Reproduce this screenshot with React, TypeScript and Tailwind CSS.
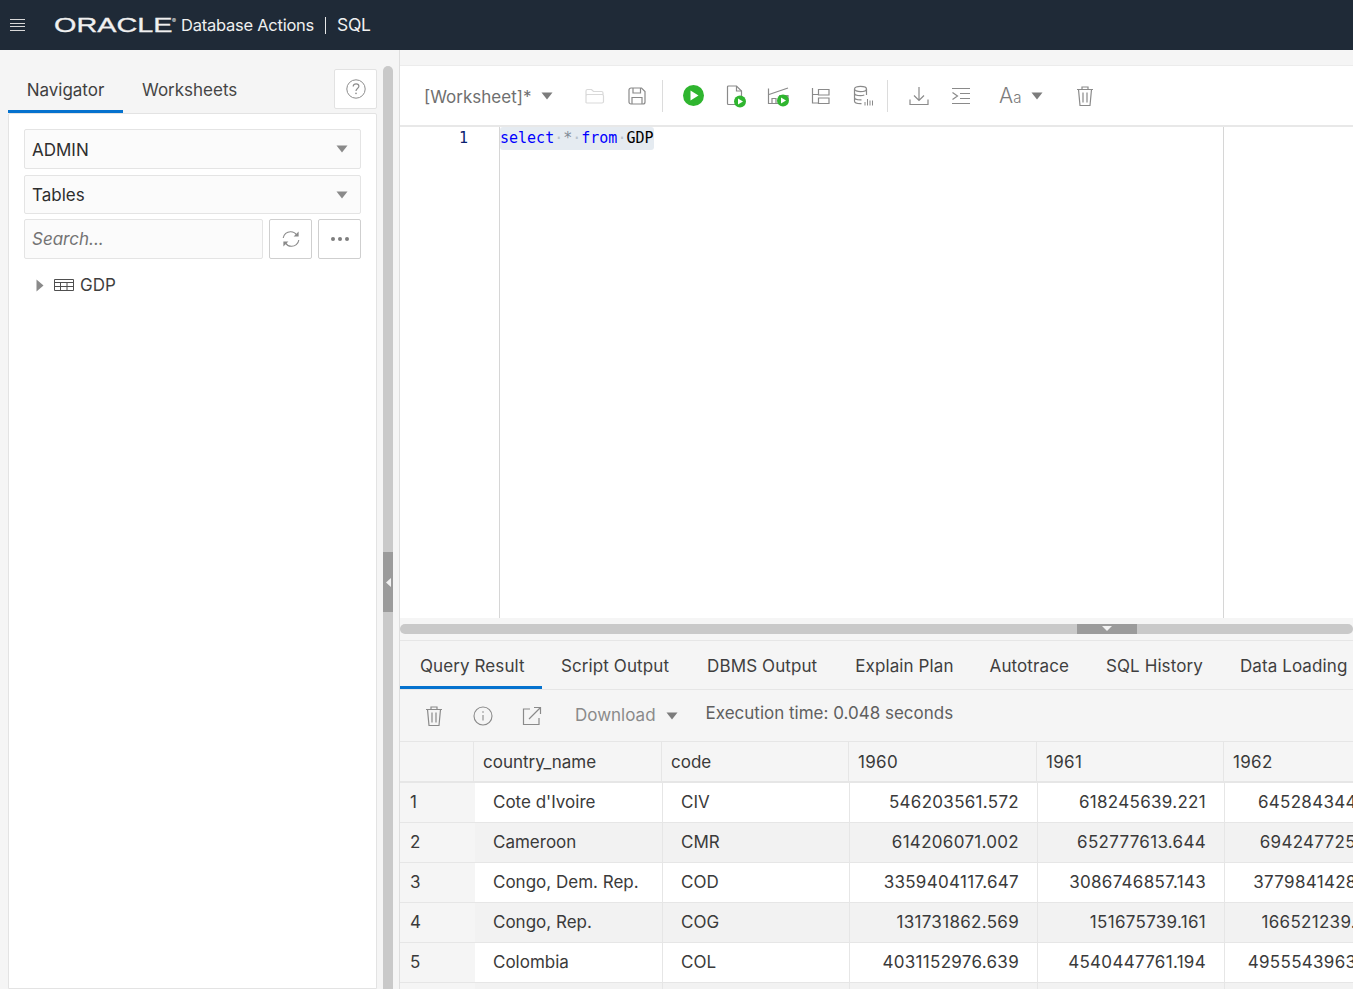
import React from "react";

const rows = [
  ["1", "Cote d'Ivoire", "CIV", "546203561.572", "618245639.221", "645284344.108"],
  ["2", "Cameroon", "CMR", "614206071.002", "652777613.644", "694247725.316"],
  ["3", "Congo, Dem. Rep.", "COD", "3359404117.647", "3086746857.143", "3779841428.571"],
  ["4", "Congo, Rep.", "COG", "131731862.569", "151675739.161", "166521239.402"],
  ["5", "Colombia", "COL", "4031152976.639", "4540447761.194", "4955543963.148"],
  ["", "", "", "", "", ""],
];

const Caret: React.FC<{ className?: string }> = ({ className }) => (
  <svg width="12" height="8" viewBox="0 0 12 8" className={className}>
    <path d="M0.5 0.5h11L6 7.5z" fill="currentColor" />
  </svg>
);

const Icon: React.FC<{ w?: number; h?: number; children: React.ReactNode }> = ({ w = 24, h = 24, children }) => (
  <svg width={w} height={h} viewBox={`0 0 ${w} ${h}`} fill="none" stroke="currentColor" strokeWidth="1.2">
    {children}
  </svg>
);

const Badge: React.FC<{ cx: number; cy: number }> = ({ cx, cy }) => (
  <g>
    <circle cx={cx} cy={cy} r="6" fill="#2fb52f" stroke="none" />
    <path d={`M${cx - 2} ${cy - 3}l5 3-5 3z`} fill="#fff" stroke="none" />
  </g>
);

const TrashIcon = () => (
  <Icon>
    <path d="M4 5.500h16M9 5.500V3h6v2.500M5.500 5.500l1.500 16h10l1.500-16M10 8.500v10M14 8.500v10" />
  </Icon>
);

const ToolBtn: React.FC<{ children: React.ReactNode; className?: string }> = ({ children, className }) => (
  <div className={"w-[42px] flex items-center justify-center " + (className || "")}>{children}</div>
);

function LeftPanel() {
  return (
    <div className="w-[383px] shrink-0 flex flex-col pl-2 pr-[6px] pt-[19px]">
      <div className="flex h-[44px] text-[17px]">
        <div className="w-[115px] h-[44px] border-b-[3px] border-[#0572ce] text-center leading-[43px] text-[#3f3f3f]">
          Navigator
        </div>
        <div className="ml-[19px] leading-[43px] text-[#454545]">Worksheets</div>
        <div className="ml-auto w-[43px] h-[40px] bg-white border border-[#e2e2e2] rounded-[2px] flex items-center justify-center text-[#8c8c8c]">
          <svg width="20" height="20" viewBox="0 0 20 20" fill="none" stroke="currentColor" strokeWidth="1">
            <circle cx="10" cy="10" r="9.200" />
            <path d="M7.200 7.600c0-1.700 1.300-2.800 2.900-2.800 1.600 0 2.800 1 2.800 2.500 0 2.200-2.900 2.300-2.900 4.700" strokeWidth="1.200" />
            <circle cx="10" cy="14.400" r="0.800" fill="currentColor" stroke="none" />
          </svg>
        </div>
      </div>
      <div className="flex-1 bg-white border border-[#e3e3e3] rounded-t-[2px] px-[15px] pt-[15px] flex flex-col text-[17px]">
        <div className="h-[40px] bg-[#fbfbfb] border border-[#e4e4e4] rounded-[2px] flex items-center pl-[7px] pr-[12px] text-[#2e2e2e]">
          <span className="mt-[3px]">ADMIN</span>
          <Caret className="ml-auto text-[#8a8a8a]" />
        </div>
        <div className="mt-[6px] h-[39px] bg-[#fbfbfb] border border-[#e4e4e4] rounded-[2px] flex items-center pl-[7px] pr-[12px] text-[#2e2e2e]">
          <span className="mt-[2px]">Tables</span>
          <Caret className="ml-auto text-[#8a8a8a]" />
        </div>
        <div className="mt-[5px] flex h-[40px]">
          <div className="w-[239px] bg-[#fbfbfb] border border-[#e4e4e4] rounded-[2px] flex items-center pl-[7px] italic text-[#737373]">
            <span className="mt-[2px]">Search...</span>
          </div>
          <div className="ml-[6px] w-[43px] bg-white border border-[#cfcfcf] rounded-[2px] flex items-center justify-center text-[#8a8a8a]">
            <svg width="20" height="20" viewBox="0 0 20 20" fill="none" stroke="currentColor" strokeWidth="1.100">
              <path d="M2.200 9c.5-3.800 3.700-6.500 7.600-6.300 2.600.1 4.600 1.400 5.800 3.400" />
              <path d="M17.800 11c-.5 3.800-3.700 6.500-7.600 6.300-2.600-.1-4.600-1.400-5.800-3.400" />
              <path d="M17.600 2.400v5h-5z" fill="currentColor" stroke="none" />
              <path d="M2.400 17.600v-5h5z" fill="currentColor" stroke="none" />
            </svg>
          </div>
          <div className="ml-[6px] w-[43px] bg-white border border-[#cfcfcf] rounded-[2px] flex items-center justify-center gap-[3px]">
            <span className="w-[4px] h-[4px] rounded-full bg-[#7e7e7e]" />
            <span className="w-[4px] h-[4px] rounded-full bg-[#7e7e7e]" />
            <span className="w-[4px] h-[4px] rounded-full bg-[#7e7e7e]" />
          </div>
        </div>
        <div className="mt-[15px] h-[22px] flex items-center pl-[12px] text-[#3f3f3f]">
          <svg width="8" height="13" viewBox="0 0 8 13" className="text-[#8a8a8a]">
            <path d="M0.500 0.500v12L7.500 6.500z" fill="currentColor" />
          </svg>
          <svg width="20" height="12" viewBox="0 0 20 12" fill="none" stroke="#4f4f4f" strokeWidth="1" className="ml-[10px]">
            <path d="M.5.5h19v11H.5zM.5 3.500h19M.5 7.500h19M6.500 3.500v8M13 3.500v8" />
          </svg>
          <span className="ml-[6px] mt-[2px]">GDP</span>
        </div>
      </div>
    </div>
  );
}

function VerticalSplitter() {
  return (
    <div className="w-[10px] shrink-0 mt-[16px] bg-[#c9c9c9] rounded-t-[5px] pt-[486px]">
      <div className="h-[60px] bg-[#9b9b9b] flex items-center justify-center">
        <svg width="5" height="9" viewBox="0 0 5 9">
          <path d="M5 0v9L0 4.500z" fill="#f2f2f2" />
        </svg>
      </div>
    </div>
  );
}

function EditorToolbar() {
  return (
    <div className="h-[61px] flex items-center border-b-2 border-[#e8e8e8] bg-white pl-[24px] text-[#8a8a8a] shrink-0">
      <span className="text-[17px] text-[#6f6f6f] w-[117px] mt-[4px]">[Worksheet]*</span>
      <Caret className="text-[#7c7c7c]" />
      <div className="ml-[21px] flex">
        <ToolBtn>
          <span className="text-[#d9d9d9]">
            <Icon w={20} h={16}>
              <path d="M1 14.500V3a1.500 1.500 0 0 1 1.500-1.500h4l2 2h8a1.500 1.500 0 0 1 1.500 1.500v1.500M1 14.500a1 1 0 0 0 1 .5h15a1.500 1.500 0 0 0 1.500-1.500V8a1.500 1.500 0 0 0-1.500-1.500H2.500A1.500 1.500 0 0 0 1 8z" />
            </Icon>
          </span>
        </ToolBtn>
        <ToolBtn>
          <Icon w={18} h={18}>
            <path d="M1 3a2 2 0 0 1 2-2h10.500L17 4.500V15a2 2 0 0 1-2 2H3a2 2 0 0 1-2-2z" />
            <path d="M5 1v5h7.500V1M4 17v-6.500h10V17" />
          </Icon>
        </ToolBtn>
      </div>
      <div className="ml-[4px] w-px h-[32px] bg-[#dcdcdc]" />
      <div className="ml-[9px] flex">
        <ToolBtn>
          <svg width="21" height="21" viewBox="0 0 21 21">
            <circle cx="10.500" cy="10.500" r="10.500" fill="#2fb52f" />
            <path d="M7.500 5.500l8 5-8 5z" fill="#fff" />
          </svg>
        </ToolBtn>
        <ToolBtn className="ml-px">
          <Icon w={22} h={24}>
            <path d="M13 20.500H3.500a1 1 0 0 1-1-1V3a1 1 0 0 1 1-1h8l5 5v6" />
            <path d="M11.500 2v5h5" />
            <Badge cx={15} cy={17.500} />
          </Icon>
        </ToolBtn>
        <ToolBtn>
          <Icon w={24} h={22}>
            <path d="M2.500 3.500v15h10" />
            <path d="M3 9.500l19-6.500" />
            <path d="M6 18.500v-5h4v5M13 10.500h9v4" />
            <Badge cx={17} cy={15.500} />
          </Icon>
        </ToolBtn>
        <ToolBtn className="ml-px">
          <Icon w={20} h={20}>
            <path d="M1.500 2v15h6M1.500 8.500h6" />
            <path d="M7.500 3.500h10.500v5.500H7.500zM7.500 12h10.500v5.500H7.500z" />
          </Icon>
        </ToolBtn>
        <ToolBtn className="ml-px">
          <Icon w={22} h={22}>
            <ellipse cx="7.500" cy="4" rx="6" ry="2.600" />
            <path d="M1.500 4v12c0 1.400 2.600 2.600 6 2.600h1M13.500 4v6M1.500 8c0 1.400 2.600 2.600 6 2.600 1.400 0 2.800-.2 3.800-.6M1.500 12.300c0 1.400 2.600 2.600 6 2.600h1" />
            <path d="M12 17v3.500M14.500 14v6.500M17 15.500v5M19.500 15.500v5" strokeWidth="1" />
          </Icon>
        </ToolBtn>
      </div>
      <div className="ml-[2px] w-px h-[32px] bg-[#dcdcdc]" />
      <div className="ml-[10px] flex">
        <ToolBtn>
          <Icon w={20} h={20}>
            <path d="M1 13.500v5h18v-5M10 1v13M5 9.500l5 5 5-5" />
          </Icon>
        </ToolBtn>
        <ToolBtn>
          <Icon w={20} h={18}>
            <path d="M1 1.500h18M9 6.500h10M9 11.500h10M1 16.500h18M1.500 5.500l5 3.500-5 3.500" />
          </Icon>
        </ToolBtn>
      </div>
      <div className="ml-[17px] flex items-baseline text-[#7c7c7c] font-light w-[32px]">
        <span className="text-[21px] leading-none">A</span>
        <span className="text-[15px] leading-none">a</span>
      </div>
      <Caret className="text-[#7c7c7c]" />
      <ToolBtn className="ml-[21px]">
        <TrashIcon />
      </ToolBtn>
    </div>
  );
}

function EditorArea() {
  return (
    <div className="h-[491px] flex bg-white shrink-0 [font-family:'DejaVu_Sans_Mono',monospace] text-[15px]">
      <div className="w-[100px] shrink-0 border-r border-[#d6d6d6] text-right pr-[31px] leading-[23px] text-[#0b216f]">
        1
      </div>
      <div className="w-[724px] shrink-0 border-r border-[#d6d6d6]">
        <div className="w-[154px] h-[23px] bg-[#e5ebf1] rounded-[3px] leading-[23px] whitespace-pre">
          <span className="text-[#0000ff]">select</span>
          <span className="text-[#b8c2cc]">·</span>
          <span className="text-[#7f8a96]">*</span>
          <span className="text-[#b8c2cc]">·</span>
          <span className="text-[#0000ff]">from</span>
          <span className="text-[#b8c2cc]">·</span>
          <span className="text-black">GDP</span>
        </div>
      </div>
    </div>
  );
}

function ResultsTabs() {
  return (
    <div className="h-[49px] flex border-b border-[#e6e6e6] text-[17px] tracking-[0.1px] text-[#3f3f3f] shrink-0 whitespace-nowrap leading-[50px]">
      <div className="h-[48px] w-[142px] pl-[20px] border-b-[3px] border-[#0572ce]">Query Result</div>
      <div className="ml-[19px]">Script Output</div>
      <div className="ml-[38px]">DBMS Output</div>
      <div className="ml-[38px]">Explain Plan</div>
      <div className="ml-[36px]">Autotrace</div>
      <div className="ml-[37px]">SQL History</div>
      <div className="ml-[37px]">Data Loading</div>
    </div>
  );
}

function ResultsToolbar() {
  return (
    <div className="h-[51px] flex items-center shrink-0 text-[#8a8a8a] pl-[22px]">
      <TrashIcon />
      <div className="ml-[27px]">
        <svg width="20" height="20" viewBox="0 0 20 20" fill="none" stroke="currentColor" strokeWidth="1.100">
          <circle cx="10" cy="10" r="9" />
          <path d="M10 9v5.500" />
          <circle cx="10" cy="6" r="0.800" fill="currentColor" stroke="none" />
        </svg>
      </div>
      <div className="ml-[29px]">
        <svg width="20" height="20" viewBox="0 0 20 20" fill="none" stroke="currentColor" strokeWidth="1.200">
          <path d="M8 3H1.500v15.500H17V12" />
          <path d="M7 13L18.500 1.500M12 1.500h6.500V8" />
        </svg>
      </div>
      <span className="ml-[33px] mt-[1px] text-[17px] text-[#8a8a8a]">Download</span>
      <Caret className="ml-[10px] text-[#7c7c7c]" />
      <span className="ml-[28px] -mt-[4px] text-[17px] text-[#5f5f5f]">Execution time: 0.048 seconds</span>
    </div>
  );
}

function ResultsTable() {
  return (
    <div className="text-[17px] text-[#3a3a3a] whitespace-nowrap">
      <div className="h-[42px] flex border-t border-b-2 border-[#e6e6e6] items-stretch leading-[41px]">
        <div className="w-[74px] shrink-0 border-r border-[#e6e6e6]" />
        <div className="w-[188px] shrink-0 pl-[9px] border-r border-[#e6e6e6]">country_name</div>
        <div className="w-[187px] shrink-0 pl-[9px] border-r border-[#e6e6e6]">code</div>
        <div className="w-[188px] shrink-0 pl-[9px] border-r border-[#e6e6e6] tracking-[0.3px]">1960</div>
        <div className="w-[187px] shrink-0 pl-[9px] border-r border-[#e6e6e6] tracking-[0.3px]">1961</div>
        <div className="w-[179px] shrink-0 pl-[9px] tracking-[0.3px]">1962</div>
      </div>
      {rows.map((r, i) => {
        const bg = i % 2 === 0 ? "bg-white" : "bg-[#f2f2f2]";
        const cell = "shrink-0 h-[39px] leading-[39px] border-r border-[#e6e6e6] " + bg;
        return (
          <div key={i} className="h-[40px] flex border-b border-[#e6e6e6]">
            <div className="w-[75px] shrink-0 pl-[10px] leading-[39px]">{r[0]}</div>
            <div className={"w-[188px] pl-[18px] " + cell}>{r[1]}</div>
            <div className={"w-[187px] pl-[18px] " + cell}>{r[2]}</div>
            <div className={"w-[188px] pr-[18px] text-right tracking-[0.3px] " + cell}>{r[3]}</div>
            <div className={"w-[187px] pr-[18px] text-right tracking-[0.3px] " + cell}>{r[4]}</div>
            <div className={"w-[179px] pr-[14px] text-right tracking-[0.3px] " + cell}>{r[5]}</div>
          </div>
        );
      })}
    </div>
  );
}

export default function App() {
  return (
    <div className="w-[1353px] h-[989px] overflow-hidden bg-[#f5f5f5] flex flex-col [font-family:Inter,sans-serif]">
      <header className="h-[50px] shrink-0 bg-[#1f2a37] flex items-center text-[#f0f0f0]">
        <svg width="16" height="16" viewBox="0 0 16 16" stroke="#d8d8d8" strokeWidth="1" className="ml-[10px]">
          <path d="M0 2.500h15M0 6.500h15M0 9.500h15M0 13.500h15" />
        </svg>
        <div className="ml-[28px] w-[118px] h-[20px] flex items-center">
          <span className="inline-block origin-left scale-x-[1.44] text-[20px] leading-none [-webkit-text-stroke:0.3px_#f0f0f0] [font-family:'Liberation_Sans',sans-serif]">
            ORACLE
          </span>
        </div>
        <span className="text-[6px] -mt-[9px]">®</span>
        <span className="ml-[5px] text-[16.500px] tracking-[-0.25px]">Database Actions</span>
        <span className="ml-[11px] w-px h-[17px] bg-[#e8e8e8]" />
        <span className="ml-[11px] text-[17.500px] tracking-[-0.3px]">SQL</span>
      </header>
      <div className="flex-1 flex min-h-0">
        <LeftPanel />
        <VerticalSplitter />
        <div className="ml-[6px] w-[954px] shrink-0 border-l border-[#dedede] pt-[15px] flex flex-col">
          <div className="border-t border-[#ececec]" />
          <EditorToolbar />
          <EditorArea />
          <div className="h-[23px] shrink-0 pt-[6px] border-b border-[#e6e6e6]">
            <div className="h-[10px] bg-[#c9c9c9] rounded-full flex">
              <div className="ml-[677px] w-[60px] bg-[#9b9b9b] flex justify-center pt-[2px]">
                <svg width="10" height="5" viewBox="0 0 10 5">
                  <path d="M0 0h10L5 5z" fill="#f2f2f2" />
                </svg>
              </div>
            </div>
          </div>
          <ResultsTabs />
          <ResultsToolbar />
          <ResultsTable />
        </div>
      </div>
    </div>
  );
}
